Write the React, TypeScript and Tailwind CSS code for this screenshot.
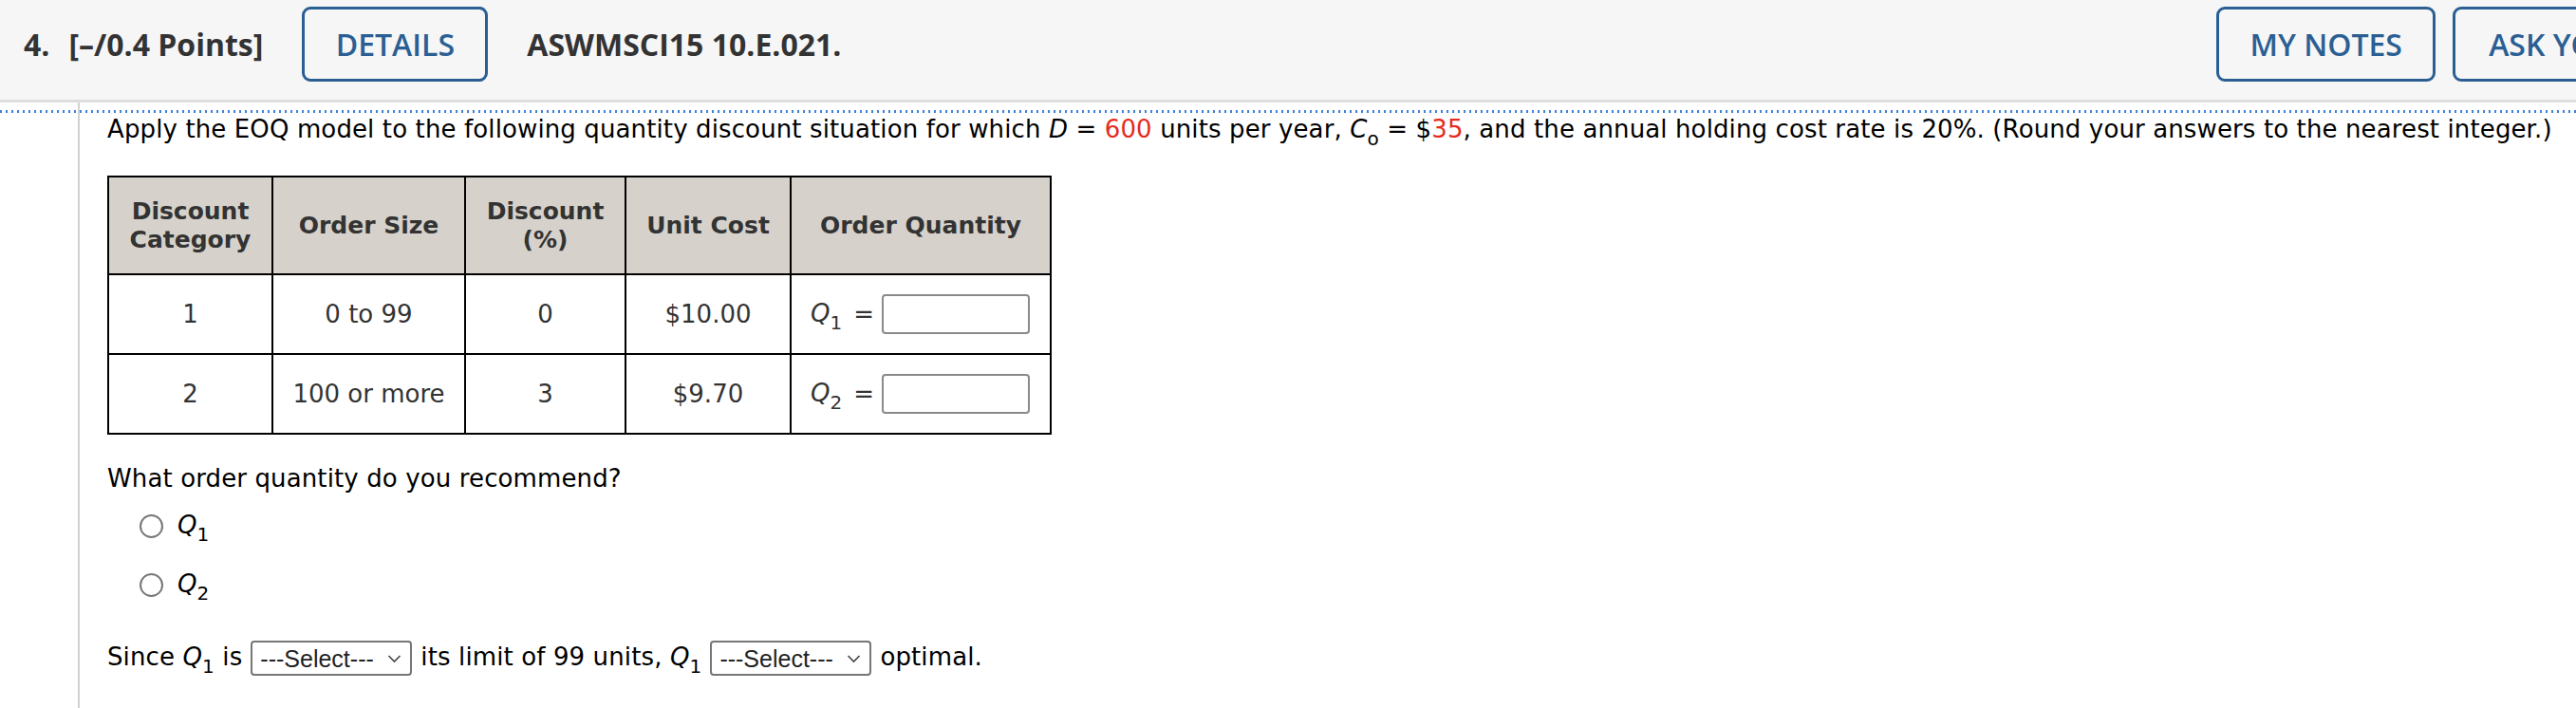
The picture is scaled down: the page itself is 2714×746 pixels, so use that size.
import React from "react";

const body = { fontFamily: '"DejaVu Sans", Verdana, sans-serif' };

function Sub({ children }: { children: React.ReactNode }) {
  return <span className="text-[20px] leading-none align-[-8px] not-italic">{children}</span>;
}

function Q({ n }: { n: string }) {
  return (
    <span className="whitespace-nowrap">
      <i>Q</i>
      <Sub>{n}</Sub>
    </span>
  );
}

function Select() {
  return (
    <span
      className="mx-[9px] inline-flex h-[37px] w-[170px] items-center justify-between rounded-[4px] border-2 border-[#767676] bg-white pl-[8px] pr-[9px] align-middle text-[25px] tracking-normal text-[#222]"
      style={{ fontFamily: '"Liberation Sans", Arial, sans-serif' }}
    >
      <span>---Select---</span>
      <svg width="15" height="10" viewBox="0 0 15 10" fill="none" stroke="#444" strokeWidth="1.6">
        <path d="M1.5 2 L7.5 8 L13.5 2" />
      </svg>
    </span>
  );
}

function Radio({ n }: { n: string }) {
  return (
    <div className="flex h-[36px] items-center pl-[34px]">
      <span className="h-[25px] w-[25px] rounded-full border-2 border-[#777] bg-white" />
      <span className="ml-[15px] text-[26px] leading-[36px]">
        <Q n={n} />
      </span>
    </div>
  );
}

const rows = [
  { cat: "1", size: "0 to 99", disc: "0", cost: "$10.00", q: "1" },
  { cat: "2", size: "100 or more", disc: "3", cost: "$9.70", q: "2" },
];

export default function App() {
  return (
    <div className="h-[746px] w-[2714px] overflow-hidden bg-white text-black">
      <header
        className="flex h-[108px] items-start overflow-hidden border-b-[3px] border-[#dedede] bg-[#f6f6f6]"
        style={{ fontFamily: '"Open Sans", sans-serif' }}
      >
        <div className="mt-[7px] flex h-[79px] w-full items-center text-[32px]">
          <span className="ml-[25px] font-bold text-[#333]">4.</span>
          <span className="ml-[20px] font-bold text-[#333]">[–/0.4 Points]</span>
          <button className="ml-[41px] flex h-[79px] w-[196px] items-center justify-center rounded-[9px] border-[3px] border-[#2b5f94] font-semibold text-[#2b5f94]">
            DETAILS
          </button>
          <span className="ml-[41px] font-bold text-[#333]">ASWMSCI15 10.E.021.</span>
          <button className="ml-auto flex h-[79px] w-[231px] shrink-0 items-center justify-center rounded-[9px] border-[3px] border-[#2b5f94] font-semibold text-[#2b5f94]">
            MY NOTES
          </button>
          <button className="-mr-[250px] ml-[18px] flex h-[79px] shrink-0 items-center justify-center whitespace-nowrap rounded-[9px] border-[3px] border-[#2b5f94] px-[35px] font-semibold text-[#2b5f94]">
            ASK YOUR TEACHER
          </button>
        </div>
      </header>

      <div className="relative flex">
        {/* dotted separator */}
        <div className="absolute left-0 right-0 top-[8px] h-[3px] bg-[repeating-linear-gradient(90deg,#3f82db_0_2px,transparent_2px_6px)]" />
        <div className="w-[82px] shrink-0" />
        <div className="h-[638px] flex-1 border-l-2 border-[#d2d2d2] pl-[29px] pt-[10px] text-[26px] leading-[36px] tracking-[0.12px]" style={body}>
          <p className="whitespace-nowrap">
            Apply the EOQ model to the following quantity discount situation for which <i>D</i> ={" "}
            <span className="text-[#e52b20]">600</span> units per year, <i>C</i>
            <Sub>o</Sub> = $<span className="text-[#e52b20]">35</span>, and the annual holding cost rate is 20%.
            (Round your answers to the nearest integer.)
          </p>

          <table className="mt-[29px] border-collapse border-2 border-black text-center tracking-normal text-[#333]">
            <thead>
              <tr className="h-[103px] bg-[#d6d2cb] text-[25px] leading-[30px] font-bold">
                <th className="w-[173px] border-2 border-black">
                  Discount
                  <br />
                  Category
                </th>
                <th className="w-[203px] border-2 border-black">Order Size</th>
                <th className="w-[169px] border-2 border-black">
                  Discount
                  <br />
                  (%)
                </th>
                <th className="w-[174px] border-2 border-black">Unit Cost</th>
                <th className="w-[274px] border-2 border-black">Order Quantity</th>
              </tr>
            </thead>
            <tbody>
              {rows.map((r) => (
                <tr key={r.cat} className="h-[84px]">
                  <td className="border-2 border-black">{r.cat}</td>
                  <td className="border-2 border-black">{r.size}</td>
                  <td className="border-2 border-black">{r.disc}</td>
                  <td className="border-2 border-black">{r.cost}</td>
                  <td className="border-2 border-black pl-[20px] text-left">
                    <div className="flex items-center">
                      <Q n={r.q} />
                      <span className="ml-[12px]">=</span>
                      <span className="ml-[8px] h-[42px] w-[156px] rounded-[4px] border-2 border-[#8a8a8a] bg-white" />
                    </div>
                  </td>
                </tr>
              ))}
            </tbody>
          </table>

          <p className="mt-[28px]">What order quantity do you recommend?</p>
          <div className="mt-[14px]">
            <Radio n="1" />
          </div>
          <div className="mt-[26px]">
            <Radio n="2" />
          </div>
          <p className="mt-[40px] whitespace-nowrap">
            Since <Q n="1" /> is
            <Select />
            its limit of 99 units, <Q n="1" />
            <Select />
            optimal.
          </p>
        </div>
      </div>
    </div>
  );
}
